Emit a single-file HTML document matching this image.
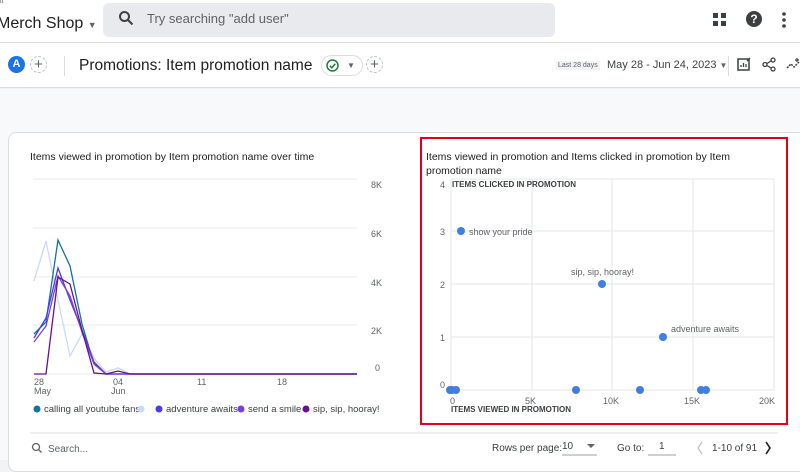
<!DOCTYPE html>
<html><head><style>
*{margin:0;padding:0;box-sizing:border-box}
body{width:800px;height:460px;overflow:hidden;background:#f1f3f4;font-family:"Liberation Sans",Arial,sans-serif;color:#202124;position:relative}
.a{position:absolute;white-space:nowrap}
</style></head><body>
<div class="a" style="left:0;top:0;width:800px;height:43px;background:#fff;border-bottom:1px solid #dadce0"></div>
<div class="a" style="left:0;top:-2px;font-size:7px;color:#5f6368">it</div>
<div class="a" style="left:-3px;top:15px;font-size:16px;color:#202124">Merch Shop <span style="font-size:9px;color:#5f6368">▼</span></div>
<div class="a" style="left:103px;top:3px;width:452px;height:34px;background:#e8eaed;border-radius:6px"></div>
<svg class="a" style="left:118px;top:10px" width="16" height="16" viewBox="0 0 16 16"><circle cx="6.5" cy="6.5" r="4.5" fill="none" stroke="#3c4043" stroke-width="2"/><path d="M10 10l4.5 4.5" stroke="#3c4043" stroke-width="2"/></svg>
<div class="a" style="left:147px;top:11px;font-size:13px;color:#5f6368">Try searching "add user"</div>
<svg class="a" style="left:713px;top:13px" width="13" height="13"><rect x="0" y="0" width="5" height="5" fill="#3c4043"/><rect x="8" y="0" width="5" height="5" fill="#3c4043"/><rect x="0" y="8" width="5" height="5" fill="#3c4043"/><rect x="8" y="8" width="5" height="5" fill="#3c4043"/></svg>
<div class="a" style="left:746px;top:11px;width:16px;height:16px;border-radius:50%;background:#3c4043;color:#fff;font-size:12px;font-weight:bold;text-align:center;line-height:16px">?</div>
<svg class="a" style="left:782px;top:12px" width="4" height="16"><circle cx="2" cy="2" r="1.8" fill="#3c4043"/><circle cx="2" cy="8" r="1.8" fill="#3c4043"/><circle cx="2" cy="14" r="1.8" fill="#3c4043"/></svg>

<div class="a" style="left:0;top:43px;width:800px;height:45px;background:#fff;border-bottom:1px solid #dadce0"></div>
<div class="a" style="left:8px;top:56px;width:17px;height:17px;border-radius:50%;background:#1a73e8;color:#fff;font-size:11px;font-weight:bold;text-align:center;line-height:17px">A</div>
<div class="a" style="left:30px;top:56px;width:17px;height:17px;border-radius:50%;border:1px dashed #bdc1c6;color:#5f6368;font-size:15px;text-align:center;line-height:15px">+</div>
<div class="a" style="left:64px;top:56px;width:1px;height:20px;background:#dadce0"></div>
<div class="a" style="left:79px;top:57px;font-size:15.5px">Promotions: Item promotion name</div>
<div class="a" style="left:321px;top:55px;width:42px;height:21px;border:1px solid #dadce0;border-radius:11px;background:#fff"></div>
<svg class="a" style="left:326px;top:59px" width="13" height="13"><circle cx="6.5" cy="6.5" r="5.5" fill="none" stroke="#188038" stroke-width="1.5"/><path d="M3.8 6.8l2 2 3.5-4" fill="none" stroke="#188038" stroke-width="1.5"/></svg>
<div class="a" style="left:347px;top:61px;font-size:8px;color:#5f6368">▼</div>
<div class="a" style="left:366px;top:56px;width:17px;height:17px;border-radius:50%;border:1px dashed #bdc1c6;color:#5f6368;font-size:15px;text-align:center;line-height:15px">+</div>
<div class="a" style="left:556px;top:61px;font-size:7px;color:#5f6368;background:#f1f3f4;padding:1px 2px">Last 28 days</div>
<div class="a" style="left:607px;top:59px;font-size:11px;color:#3c4043">May 28 - Jun 24, 2023 <span style="font-size:8px;color:#5f6368">▼</span></div>
<div class="a" style="left:728px;top:56px;width:1px;height:20px;background:#dadce0"></div>
<svg class="a" style="left:737px;top:57px" width="15" height="15"><rect x="1" y="2" width="11" height="11" fill="none" stroke="#3c4043" stroke-width="1.5"/><path d="M4 10V8M6.5 10V6M9 10V7M10 4l3-3" stroke="#3c4043" stroke-width="1.3"/></svg>
<svg class="a" style="left:762px;top:57px" width="15" height="15"><circle cx="11" cy="3" r="2" fill="none" stroke="#3c4043" stroke-width="1.3"/><circle cx="3" cy="7.5" r="2" fill="none" stroke="#3c4043" stroke-width="1.3"/><circle cx="11" cy="12" r="2" fill="none" stroke="#3c4043" stroke-width="1.3"/><path d="M5 6.5l4-2.5M5 8.5l4 2.5" stroke="#3c4043" stroke-width="1.3"/></svg>
<svg class="a" style="left:786px;top:57px" width="14" height="15"><path d="M1 11l4-4 3 3 5-5" fill="none" stroke="#3c4043" stroke-width="1.5" stroke-dasharray="2 1"/><path d="M11 1v4M9 3h4" stroke="#3c4043" stroke-width="1.2"/></svg>

<div class="a" style="left:0;top:89px;width:800px;height:371px;background:#f8f9fa"></div>
<div class="a" style="left:8px;top:132px;width:800px;height:340px;background:#fff;border:1px solid #dadce0;border-radius:8px"></div>

<div class="a" style="left:30px;top:151px;font-size:10.5px">Items viewed in promotion by Item promotion name over time</div>
<svg class="a" style="left:0;top:0" width="800" height="460">
<g stroke="#e8eaed" stroke-width="1">
<line x1="33" y1="179" x2="357" y2="179"/><line x1="33" y1="228" x2="357" y2="228"/><line x1="33" y1="277" x2="357" y2="277"/><line x1="33" y1="325" x2="357" y2="325"/><line x1="33" y1="374" x2="357" y2="374"/>
</g>
<g font-size="9" fill="#5f6368" font-family="Liberation Sans">
<text x="371" y="188">8K</text><text x="371" y="237">6K</text><text x="371" y="286">4K</text><text x="371" y="334">2K</text><text x="375" y="371">0</text>
<text x="34" y="385">28</text><text x="34" y="394">May</text><text x="113" y="385">04</text><text x="111" y="394">Jun</text><text x="197" y="385">11</text><text x="277" y="385">18</text>
</g>
<g fill="none" stroke-width="1.3">
<polyline stroke="#c6dafc" points="34,281 46,241 58,300 70,356 82,334 94,358 106,372 118,368 130,374 357,374"/>
<polyline stroke="#12739d" points="34,334 46,322 58,240 70,266 82,324 94,364 106,374 118,374 357,374"/>
<polyline stroke="#4a3ce8" points="34,338 46,318 58,268 70,300 82,330 94,362 106,374 118,374 357,374"/>
<polyline stroke="#7b3fd8" points="34,342 46,326 58,276 70,296 82,332 94,364 106,374 118,374 357,374"/>
<polyline stroke="#6a0f8e" points="34,374 46,374 58,277 70,284 82,330 94,373 106,374 118,371 130,374 357,374"/>
</g>
<g font-size="9.5" fill="#3c4043" font-family="Liberation Sans">
<circle cx="37" cy="409" r="3.5" fill="#12739d"/><text x="44" y="412">calling all youtube fans</text>
<circle cx="141" cy="409" r="3.5" fill="#c6dafc"/>
<circle cx="159" cy="409" r="3.5" fill="#4a3ce8"/><text x="166" y="412">adventure awaits</text>
<circle cx="241" cy="409" r="3.5" fill="#7b3fd8"/><text x="248" y="412">send a smile</text>
<circle cx="306" cy="409" r="3.5" fill="#6a0f8e"/><text x="313" y="412">sip, sip, hooray!</text>
</g>
<line x1="30" y1="433" x2="778" y2="433" stroke="#e0e0e0"/>
<circle cx="36" cy="447" r="3.5" fill="none" stroke="#5f6368" stroke-width="1.3"/><path d="M38.5 449.5l3 3" stroke="#5f6368" stroke-width="1.3"/>
<text x="48" y="452" font-size="10" fill="#5f6368" font-family="Liberation Sans">Search...</text>

<rect x="421" y="138" width="366" height="286" fill="none" stroke="#e3001b" stroke-width="2"/>
<text x="426" y="160" font-size="10.5" fill="#202124" font-family="Liberation Sans">Items viewed in promotion and Items clicked in promotion by Item</text>
<text x="426" y="174" font-size="10.5" fill="#202124" font-family="Liberation Sans">promotion name</text>
<g stroke="#e3e5e8">
<line x1="451" y1="179" x2="774" y2="179"/><line x1="451" y1="231" x2="774" y2="231"/><line x1="451" y1="284" x2="774" y2="284"/><line x1="451" y1="337" x2="774" y2="337"/><line x1="451" y1="390" x2="774" y2="390"/>
<line x1="451" y1="179" x2="451" y2="390"/><line x1="532" y1="179" x2="532" y2="390"/><line x1="612" y1="179" x2="612" y2="390"/><line x1="693" y1="179" x2="693" y2="390"/><line x1="774" y1="179" x2="774" y2="390"/>
</g>
<g font-size="9" fill="#5f6368" font-family="Liberation Sans">
<text x="440" y="188">4</text><text x="440" y="235">3</text><text x="440" y="288">2</text><text x="440" y="341">1</text><text x="440" y="388">0</text>
<text x="450" y="404">0</text><text x="525" y="404">5K</text><text x="603" y="404">10K</text><text x="684" y="404">15K</text><text x="759" y="404">20K</text>
<text x="469" y="235" fill="#5f6368">show your pride</text><text x="571" y="275">sip, sip, hooray!</text><text x="671" y="332">adventure awaits</text>
</g>
<g font-size="8" font-weight="bold" fill="#3c4043" font-family="Liberation Sans"><text x="452" y="187">ITEMS CLICKED IN PROMOTION</text><text x="451" y="412">ITEMS VIEWED IN PROMOTION</text></g>
<g fill="#3f7fe0">
<circle cx="461" cy="231" r="4"/><circle cx="602" cy="284" r="4"/><circle cx="663" cy="337" r="4"/>
<circle cx="450" cy="390" r="4"/><circle cx="452" cy="390" r="4"/><circle cx="456" cy="390" r="4"/><circle cx="576" cy="390" r="4"/><circle cx="640" cy="390" r="4"/><circle cx="701" cy="390" r="4"/><circle cx="706" cy="390" r="4"/>
</g>
<g font-size="10" fill="#3c4043" font-family="Liberation Sans">
<text x="492" y="451">Rows per page:</text><text x="562" y="449">10</text><path d="M587 444l4 4 4-4z" fill="#5f6368"/><line x1="562" y1="455" x2="597" y2="455" stroke="#9aa0a6"/>
<text x="617" y="451">Go to:</text><text x="659" y="449">1</text><line x1="648" y1="455" x2="676" y2="455" stroke="#9aa0a6"/>
<path d="M702 442l-4 6 4 6" fill="none" stroke="#bdc1c6" stroke-width="1.3"/>
<text x="712" y="451">1-10 of 91</text>
<path d="M766 442l4 6-4 6" fill="none" stroke="#202124" stroke-width="1.6"/>
</g>
</svg>
</body></html>
